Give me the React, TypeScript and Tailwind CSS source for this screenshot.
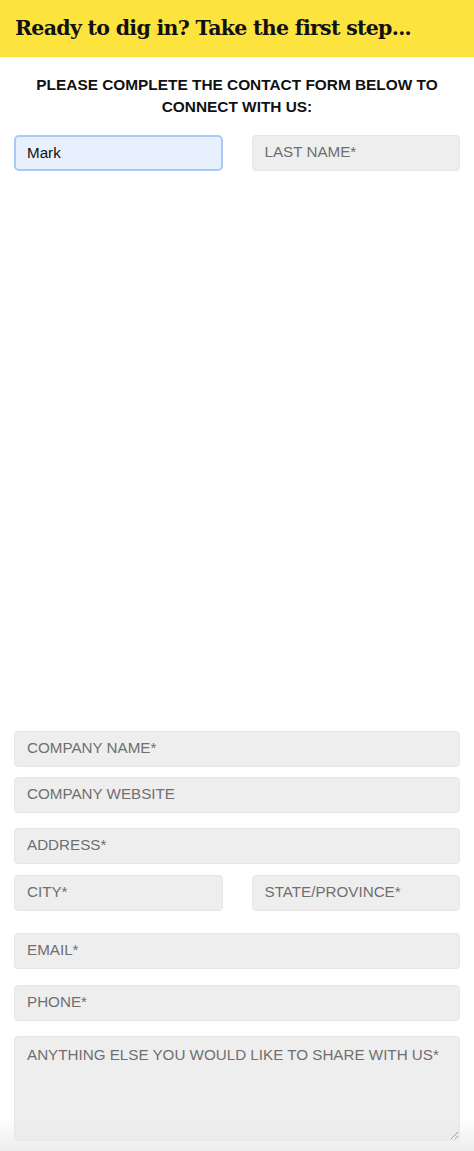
import React from "react";

const field =
  "block h-9 w-full rounded-[4px] border border-[#e6e6e6] bg-[#eeeeee] px-[12px] pb-[3px] text-[15.2px] text-[#222] placeholder:text-[#6f6f6f] outline-none";

export default function App() {
  return (
    <div className="relative min-h-[1151px] bg-white font-['Liberation_Sans',Arial,sans-serif]">
      <div className="flex h-[57px] items-center bg-[#fde33e] px-[15px]">
        <h1 className="font-['DejaVu_Serif',serif] text-[20.5px] font-bold tracking-[-0.7px] text-[#111]">
          Ready to dig in? Take the first step...
        </h1>
      </div>

      <form className="px-[14px]">
        <p className="mx-auto mt-[17px] max-w-[430px] text-center text-[15.4px] font-bold leading-[22px] text-[#111]">
          PLEASE COMPLETE THE CONTACT FORM BELOW TO CONNECT WITH US:
        </p>

        <div className="mt-[17px] grid grid-cols-2 gap-[29px]">
          <input
            defaultValue="Mark"
            className="block h-9 w-full rounded-[5px] border-2 border-[#a9c9f7] bg-[#e9f0fd] px-[11px] pb-[2px] text-[15.2px] text-[#111] outline-none"
          />
          <input placeholder="LAST NAME*" className={field} />
        </div>

        <div className="h-[560px]" />

        <input placeholder="COMPANY NAME*" className={field} />
        <input placeholder="COMPANY WEBSITE" className={`${field} mt-[10px]`} />
        <input placeholder="ADDRESS*" className={`${field} mt-[15px]`} />
        <div className="mt-[11px] grid grid-cols-2 gap-[29px]">
          <input placeholder="CITY*" className={field} />
          <input placeholder="STATE/PROVINCE*" className={field} />
        </div>
        <input placeholder="EMAIL*" className={`${field} mt-[22px]`} />
        <input placeholder="PHONE*" className={`${field} mt-[16px]`} />
        <textarea
          placeholder="ANYTHING ELSE YOU WOULD LIKE TO SHARE WITH US*"
          className="mt-[15px] block h-[105px] w-full resize-y rounded-[4px] border border-[#e6e6e6] bg-[#eeeeee] pl-[12px] pr-[6px] py-[7px] text-[15.2px] text-[#222] placeholder:text-[#6f6f6f] outline-none"
        />
      </form>

      <div className="pointer-events-none absolute inset-x-0 bottom-0 h-[34px] bg-gradient-to-b from-transparent to-[#e9e9e9]/80" />
    </div>
  );
}
